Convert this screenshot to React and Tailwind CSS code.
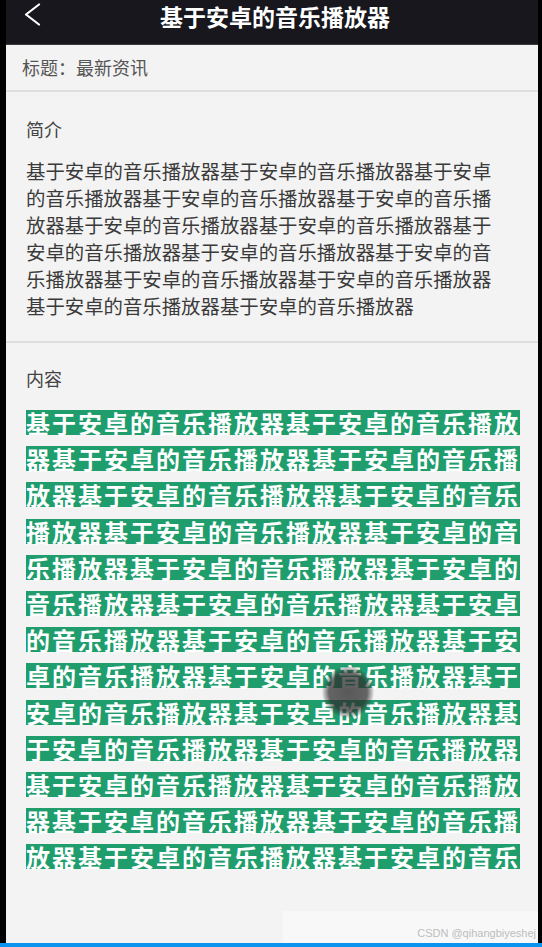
import React from "react";

const UNIT = "基于安卓的音乐播放器";
const intro = UNIT.repeat(14);
const content = UNIT.repeat(25).slice(0, 247);
const rows = [];
for (let i = 0; i < content.length; i += 19) rows.push(content.slice(i, i + 19));

export default function App() {
  return (
    <div
      className="relative w-[542px] h-[947px] overflow-hidden bg-black flex flex-col"
      style={{ fontFamily: '"Noto Sans CJK SC", "Noto Sans", sans-serif' }}
    >
      <div className="flex flex-1 min-h-0">
        <div className="w-[6px] shrink-0 bg-black" />
        <div className="flex-1 flex flex-col bg-[#f3f3f3]">
          {/* Header */}
          <div className="h-[45px] shrink-0 bg-[#17171d] border-b border-[#3a3a40] grid grid-cols-[1fr_auto_1fr] items-start">
            <div className="pl-[18px] pt-[3px]">
              <svg width="18" height="24" viewBox="0 0 18 24" fill="none">
                <polyline
                  points="15,1.5 2,11.5 15,21.5"
                  stroke="#ffffff"
                  strokeWidth="2.2"
                  strokeLinecap="round"
                  strokeLinejoin="round"
                />
              </svg>
            </div>
            <div className="text-white font-bold text-[23px] leading-[30px] pt-[1px] pl-[6px]">
              基于安卓的音乐播放器
            </div>
            <div />
          </div>

          {/* Title row */}
          <div className="h-[47px] shrink-0 flex items-center pl-[16px] border-b-2 border-[#dedede] text-[#555555] text-[18px]">
            标题：最新资讯
          </div>

          {/* Intro */}
          <div className="shrink-0 pl-[20px] pt-[25px] pb-[22px] border-b-2 border-[#dedede]">
            <div className="text-[18px] leading-[24px] text-[#444444]">简介</div>
            <p className="mt-[16px] w-[476px] text-[19.4px] leading-[27px] text-[#3a3a3a] break-all">
              {intro}
            </p>
          </div>

          {/* Content */}
          <div className="flex-1 pl-[20px] pt-[23px]">
            <div className="text-[18px] leading-[24px] text-[#444444]">内容</div>
            <div className="mt-[20px] flex flex-col items-start gap-[11.2px]">
              {rows.map((r, i) => (
                <div
                  key={i}
                  className="h-[25px] bg-[#1f9d6d] text-white font-bold text-[24px] leading-[25px] tracking-[2px] whitespace-nowrap"
                >
                  {r}
                </div>
              ))}
            </div>
          </div>
        </div>
        <div className="w-[4px] shrink-0 bg-black" />
      </div>
      <div className="h-[4px] shrink-0 bg-[#0a94ef]" />

      {/* watermark region */}
      <div className="absolute right-[4px] bottom-[4px] w-[255px] h-[32px] bg-white/40 flex items-end justify-end pr-[2px] pb-[3px]">
        <span
          className="text-[11px] leading-[13px] text-[#bdbdbd]"
          style={{ fontFamily: '"Liberation Sans", Arial, sans-serif' }}
        >
          CSDN @qihangbiyeshej
        </span>
      </div>

      {/* touch indicator */}
      <div className="absolute left-[322px] top-[666px] w-[52px] h-[52px] rounded-full bg-[radial-gradient(circle,rgba(45,45,45,0.78)_0%,rgba(45,45,45,0.72)_52%,rgba(45,45,45,0)_72%)]" />
    </div>
  );
}
